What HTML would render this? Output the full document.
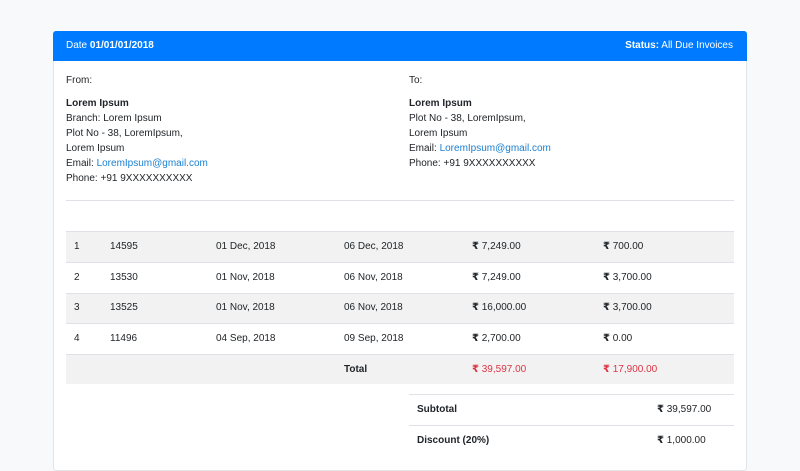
<!DOCTYPE html>
<html><head><meta charset="utf-8"><style>
*{margin:0;padding:0;box-sizing:border-box}
html,body{width:800px;height:450px;overflow:hidden;background:#f8f9fa;font-family:"Liberation Sans","DejaVu Sans",sans-serif;font-size:10px;color:#212529}
.card{position:absolute;left:53px;top:31px;width:694px;height:440px;background:#fff;border:1px solid #e2e4e6;border-radius:3px}
.hdr{position:absolute;left:53px;top:31px;width:694px;height:30px;background:#007bff;color:#fff;border-radius:3px 3px 0 0}
.t{position:absolute;white-space:nowrap;line-height:12px}
b{font-weight:bold}
a{color:#1a7fd0;text-decoration:none}
.r{font-family:"DejaVu Sans",sans-serif;font-size:10px;font-weight:bold}
.row{position:absolute;left:66px;width:668px;border-top:1px solid #dee2e6}
.g{background:#f2f2f2}
.red{color:#dc3545}
</style></head><body>
<div class="card"></div>
<div class="hdr"></div>
<div class="t" style="left:66px;top:40px;color:#fff">Date <b>01/01/01/2018</b></div>
<div class="t" style="right:67px;top:40px;color:#fff"><b>Status:</b> All Due Invoices</div>

<div class="t" style="left:66px;top:73px;line-height:15px">From:</div>
<div class="t" style="left:66px;top:96px;line-height:15px"><b>Lorem Ipsum</b><br>Branch: Lorem Ipsum<br>Plot No - 38, LoremIpsum,<br>Lorem Ipsum<br>Email: <a>LoremIpsum@gmail.com</a><br>Phone: +91 9XXXXXXXXXX</div>
<div class="t" style="left:409px;top:73px;line-height:15px">To:</div>
<div class="t" style="left:409px;top:96px;line-height:15px"><b>Lorem Ipsum</b><br>Plot No - 38, LoremIpsum,<br>Lorem Ipsum<br>Email: <a>LoremIpsum@gmail.com</a><br>Phone: +91 9XXXXXXXXXX</div>
<div class="row" style="top:200px;height:0"></div>

<div class="row g" style="top:231px;height:31px"></div>
<div class="row" style="top:262px;height:31px"></div>
<div class="row g" style="top:293px;height:30px"></div>
<div class="row" style="top:323px;height:31px"></div>
<div class="row g" style="top:354px;height:30px"></div>

<div class="t" style="left:74px;top:241px">1</div><div class="t" style="left:110px;top:241px">14595</div><div class="t" style="left:216px;top:241px">01 Dec, 2018</div><div class="t" style="left:344px;top:241px">06 Dec, 2018</div><div class="t" style="left:472px;top:241px"><span class="r">₹</span> 7,249.00</div><div class="t" style="left:603px;top:241px"><span class="r">₹</span> 700.00</div>
<div class="t" style="left:74px;top:272px">2</div><div class="t" style="left:110px;top:272px">13530</div><div class="t" style="left:216px;top:272px">01 Nov, 2018</div><div class="t" style="left:344px;top:272px">06 Nov, 2018</div><div class="t" style="left:472px;top:272px"><span class="r">₹</span> 7,249.00</div><div class="t" style="left:603px;top:272px"><span class="r">₹</span> 3,700.00</div>
<div class="t" style="left:74px;top:302px">3</div><div class="t" style="left:110px;top:302px">13525</div><div class="t" style="left:216px;top:302px">01 Nov, 2018</div><div class="t" style="left:344px;top:302px">06 Nov, 2018</div><div class="t" style="left:472px;top:302px"><span class="r">₹</span> 16,000.00</div><div class="t" style="left:603px;top:302px"><span class="r">₹</span> 3,700.00</div>
<div class="t" style="left:74px;top:333px">4</div><div class="t" style="left:110px;top:333px">11496</div><div class="t" style="left:216px;top:333px">04 Sep, 2018</div><div class="t" style="left:344px;top:333px">09 Sep, 2018</div><div class="t" style="left:472px;top:333px"><span class="r">₹</span> 2,700.00</div><div class="t" style="left:603px;top:333px"><span class="r">₹</span> 0.00</div>
<div class="t" style="left:344px;top:364px"><b>Total</b></div><div class="t red" style="left:472px;top:364px"><span class="r">₹</span> 39,597.00</div><div class="t red" style="left:603px;top:364px"><span class="r">₹</span> 17,900.00</div>

<div class="row" style="left:409px;width:325px;top:394px;height:31px"></div>
<div class="row" style="left:409px;width:325px;top:425px;height:31px"></div>
<div class="t" style="left:417px;top:404px"><b>Subtotal</b></div><div class="t" style="left:657px;top:404px"><span class="r">₹</span> 39,597.00</div>
<div class="t" style="left:417px;top:435px"><b>Discount (20%)</b></div><div class="t" style="left:657px;top:435px"><span class="r">₹</span> 1,000.00</div>
</body></html>
